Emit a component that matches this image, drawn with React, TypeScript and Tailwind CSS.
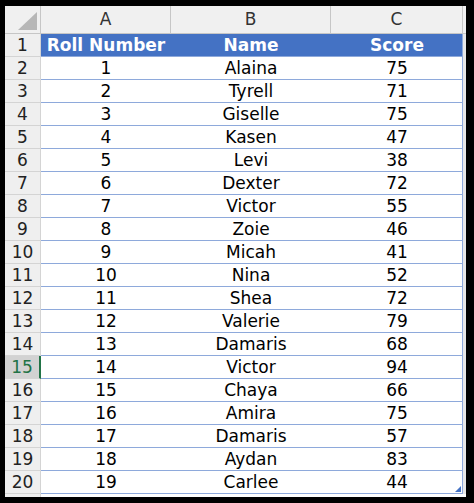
import React from "react";

const rows: [number, string, number][] = [
  [1, "Alaina", 75],
  [2, "Tyrell", 71],
  [3, "Giselle", 75],
  [4, "Kasen", 47],
  [5, "Levi", 38],
  [6, "Dexter", 72],
  [7, "Victor", 55],
  [8, "Zoie", 46],
  [9, "Micah", 41],
  [10, "Nina", 52],
  [11, "Shea", 72],
  [12, "Valerie", 79],
  [13, "Damaris", 68],
  [14, "Victor", 94],
  [15, "Chaya", 66],
  [16, "Amira", 75],
  [17, "Damaris", 57],
  [18, "Aydan", 83],
  [19, "Carlee", 44],
];

const cols = "grid grid-cols-[36px_130px_160px_132px_3px]";

const RowHead = ({ n, active }: { n: number; active?: boolean }) => (
  <div
    className={
      "flex items-center justify-center border-b border-r border-[#d4d4d4] " +
      (active
        ? "bg-[#d2d2d2] text-[#217346] border-r-2 border-r-[#217346]"
        : "bg-[#efefef] text-[#222]")
    }
  >
    {n}
  </div>
);

export default function App() {
  return (
    <div
      className="w-[474px] h-[503px] bg-black pt-[6px] pl-[5px] overflow-hidden text-[17px] leading-none"
      style={{ fontFamily: "'DejaVu Sans', Verdana, sans-serif" }}
    >
      <div className="w-[461px] bg-white">
        {/* column letters */}
        <div className={cols + " h-[28px] bg-[#f0f0f0] border-b border-[#c6c6c6] text-[#333]"}>
          <div className="relative border-r border-[#c6c6c6]">
            <svg className="absolute right-[3px] bottom-[3px]" width="19" height="18" viewBox="0 0 19 18">
              <polygon points="19,0 19,18 0,18" fill="#b7b7b7" />
            </svg>
          </div>
          <div className="flex items-center justify-center border-r border-[#c6c6c6]">A</div>
          <div className="flex items-center justify-center border-r border-[#c6c6c6]">B</div>
          <div className="flex items-center justify-center border-r border-[#c6c6c6]">C</div>
          <div className="bg-[#f0f0f0]" />
        </div>

        {/* header row */}
        <div className={cols + " h-[23px]"}>
          <RowHead n={1} />
          <div className="col-span-3 grid grid-cols-[130px_160px_132px] bg-[#4472c4] text-white font-bold border-b border-[#8ea9db] border-r border-r-[#8ea9db]">
            <div className="flex items-center justify-center">Roll Number</div>
            <div className="flex items-center justify-center">Name</div>
            <div className="flex items-center justify-center">Score</div>
          </div>
          <div className="bg-[#e8e8e8]" />
        </div>

        {rows.map(([r, name, score], i) => (
          <div key={i} className={cols + " h-[23px]"}>
            <RowHead n={i + 2} active={i + 2 === 15} />
            <div className="relative col-span-3 grid grid-cols-[130px_160px_132px] text-black border-b border-[#8ea9db] border-r border-r-[#8ea9db]">
              <div className="flex items-center justify-center">{r}</div>
              <div className="flex items-center justify-center">{name}</div>
              <div className="flex items-center justify-center">{score}</div>
              {i === rows.length - 1 && (
                <svg className="absolute right-[1px] bottom-[1px]" width="6" height="6" viewBox="0 0 6 6">
                  <polygon points="6,0 6,6 0,6" fill="#4472c4" />
                </svg>
              )}
            </div>
            <div className="bg-[#e8e8e8]" />
          </div>
        ))}

        <div className={cols + " h-[3px]"}>
          <div className="bg-[#efefef] border-r border-[#d4d4d4]" />
          <div className="col-span-4 bg-white" />
        </div>
      </div>
    </div>
  );
}
